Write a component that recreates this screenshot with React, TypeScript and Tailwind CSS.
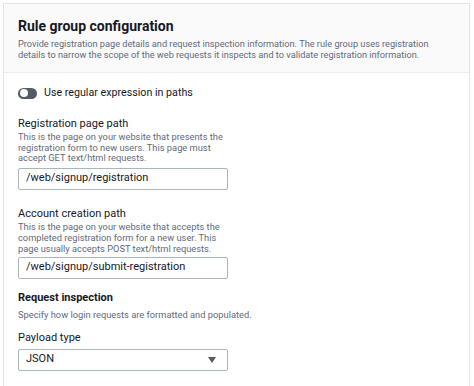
export default function App() {
  const font = { fontFamily: 'Roboto, "Noto Sans", sans-serif' };
  return (
    <div className="w-[474px] h-[386px] overflow-hidden bg-white pt-[3px] pl-[3px]" style={font}>
      <div className="w-[467px] border border-[#e1e4e4] text-[#16191f]">
        {/* header */}
        <div className="bg-[#fafafa] border-b border-[#eaeded] px-[14px] pt-[14px] pb-[12px]">
          <h2 className="text-[14px] leading-[16px] font-bold">Rule group configuration</h2>
          <p className="mt-[4px] text-[9.2px] leading-[11px] text-[#5f6b7a]">
            Provide registration page details and request inspection information. The rule group uses registration
            details to narrow the scope of the web requests it inspects and to validate registration information.
          </p>
        </div>

        {/* body */}
        <div className="px-[14px] pt-[13px] pb-[20px]">
          <div className="flex items-center gap-[7px] h-[14px]">
            <div className="w-[19px] h-[11px] rounded-full bg-[#545b64] pl-[1.5px] flex items-center">
              <div className="w-[8px] h-[8px] rounded-full bg-white" />
            </div>
            <span className="text-[10.7px] leading-[14px]">Use regular expression in paths</span>
          </div>

          <div className="mt-[17px]">
            <div className="text-[11px] leading-[14px]">Registration page path</div>
            <p className="mt-[1px] text-[9.3px] leading-[10.5px] text-[#5f6b7a] w-[212px]">
              This is the page on your website that presents the registration form to new users. This page must
              accept GET text/html requests.
            </p>
            <div className="mt-[4px] w-[210px] h-[22px] border border-[#aab7b8] rounded-[2px] px-[7px] flex items-center text-[11px]">
              /web/signup/registration
            </div>
          </div>

          <div className="mt-[17px]">
            <div className="text-[11px] leading-[14px]">Account creation path</div>
            <p className="text-[9.3px] leading-[11px] text-[#5f6b7a] w-[212px]">
              This is the page on your website that accepts the completed registration form for a new user. This
              page usually accepts POST text/html requests.
            </p>
            <div className="mt-[3px] w-[210px] h-[22px] border border-[#aab7b8] rounded-[2px] px-[7px] flex items-center text-[11px]">
              /web/signup/submit-registration
            </div>
          </div>

          <div className="mt-[12px]">
            <div className="text-[11px] leading-[14px] font-bold">Request inspection</div>
            <p className="mt-[4px] text-[9.3px] leading-[11px] text-[#5f6b7a]">
              Specify how login requests are formatted and populated.
            </p>
          </div>

          <div className="mt-[11px]">
            <div className="text-[11px] leading-[14px]">Payload type</div>
            <div className="mt-[4px] w-[210px] h-[22px] border border-[#aab7b8] rounded-[2px] pl-[7px] pr-[11px] flex items-center justify-between text-[11px]">
              <span>JSON</span>
              <svg width="8" height="6" viewBox="0 0 8 6">
                <path d="M0 0 H8 L4 6 Z" fill="#545b64" />
              </svg>
            </div>
          </div>
        </div>
      </div>
    </div>
  );
}
